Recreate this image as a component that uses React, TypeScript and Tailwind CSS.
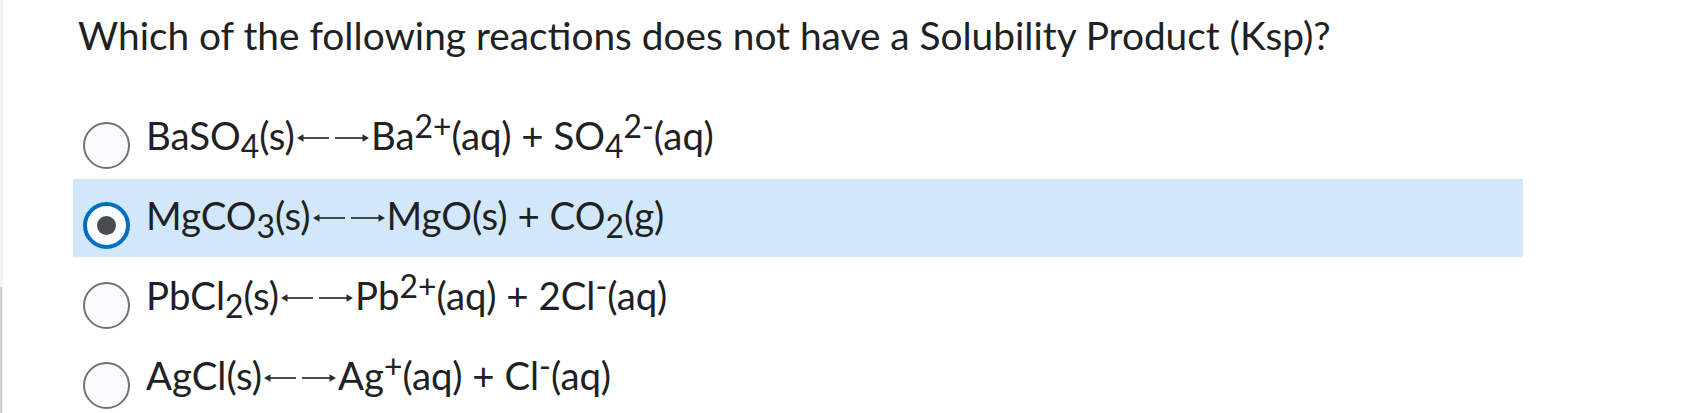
import React from 'react';

type Part = { t: string; sub?: boolean; sup?: boolean; arrow?: boolean };

interface Choice {
  id: string;
  parts: Part[];
}

const AR: Part = { t: '\u2190\u2192', arrow: true };

const choices: Choice[] = [
  {
    id: 'a',
    parts: [
      { t: 'BaSO' }, { t: '4', sub: true }, { t: '(s)' }, AR, { t: 'Ba' }, { t: '2+', sup: true },
      { t: '(aq) + SO' }, { t: '4', sub: true }, { t: '2-', sup: true }, { t: '(aq)' },
    ],
  },
  {
    id: 'b',
    parts: [
      { t: 'MgCO' }, { t: '3', sub: true }, { t: '(s)' }, AR, { t: 'MgO(s) + CO' }, { t: '2', sub: true }, { t: '(g)' },
    ],
  },
  {
    id: 'c',
    parts: [
      { t: 'PbCl' }, { t: '2', sub: true }, { t: '(s)' }, AR, { t: 'Pb' }, { t: '2+', sup: true },
      { t: '(aq) + 2Cl' }, { t: '-', sup: true }, { t: '(aq)' },
    ],
  },
  {
    id: 'd',
    parts: [
      { t: 'AgCl(s)' }, AR, { t: 'Ag' }, { t: '+', sup: true }, { t: '(aq) + Cl' }, { t: '-', sup: true }, { t: '(aq)' },
    ],
  },
];

// the two reaction arrows, thin shafts with small heads
const Arrows: React.FC = () => (
  <svg
    role="img"
    aria-label="←→"
    width="76"
    height="16"
    viewBox="0 0 76 16"
    className="inline-block align-[4px]"
  >
    <line x1="6" y1="8" x2="34" y2="8" stroke="#2a2b2c" strokeWidth="1.7" />
    <path d="M2 8 L8.5 4.3 L8.5 11.7 Z" fill="#2a2b2c" />
    <line x1="40" y1="8" x2="69" y2="8" stroke="#2a2b2c" strokeWidth="1.7" />
    <path d="M74 8 L67.5 4.3 L67.5 11.7 Z" fill="#2a2b2c" />
  </svg>
);

const Formula: React.FC<{ parts: Part[] }> = ({ parts }) => (
  <span className="whitespace-pre">
    {parts.map((p, i) => {
      if (p.arrow) {
        return <Arrows key={i} />;
      }
      if (p.sub) {
        return (
          <sub key={i} className="text-[83%] leading-none relative align-baseline top-[0.27em] bottom-auto">
            {p.t}
          </sub>
        );
      }
      if (p.sup) {
        return (
          <sup key={i} className="text-[83%] leading-none relative align-baseline top-[-0.36em]">
            {p.t}
          </sup>
        );
      }
      return <React.Fragment key={i}>{p.t}</React.Fragment>;
    })}
  </span>
);

const Radio: React.FC<{ checked: boolean }> = ({ checked }) =>
  checked ? (
    <span className="shrink-0 w-[47px] h-[47px] rounded-full border-[4px] border-[#006fbf] bg-[#f9fbff] flex items-center justify-center">
      <span className="block w-[19px] h-[19px] rounded-full bg-[#494c4e]" />
    </span>
  ) : (
    <span className="block shrink-0 w-[47px] h-[47px] rounded-full border-2 border-[#6e7376] bg-[#f9fbff]" />
  );

export default function App() {
  const selected = 'b';

  return (
    <div className="flex h-[413px] overflow-hidden bg-white font-['Lato','Noto_Sans',sans-serif] text-[#202122]">
      <div className="flex flex-col w-[3px] shrink-0">
        <div className="h-[287px] bg-[#f2f2f2]" />
        <div className="flex-1 flex">
          <div className="w-[2px] bg-[#cfcfcf]" />
          <div className="w-[1px] bg-[#f2f2f2]" />
        </div>
      </div>

      <div className="pl-[70px]">
        <h1 className="pl-[5px] pt-[12px] text-[38.8px] leading-[1.2] font-normal">
          Which of the following reactions does not have a Solubility Product (Ksp)?
        </h1>

        <div className="mt-[40px] flex flex-col gap-[2px] w-[1450px]" role="radiogroup">
          {choices.map((c) => {
            const isOn = c.id === selected;
            return (
              <label
                key={c.id}
                className={
                  'flex items-start h-[78px] px-[10px] cursor-pointer ' + (isOn ? 'bg-[#d2e7fa]' : '')
                }
              >
                <span className="block mt-[23px]">
                  <Radio checked={isOn} />
                </span>
                <span className="ml-[16px] mt-[13px] text-[38.4px] leading-[1.2]">
                  <Formula parts={c.parts} />
                </span>
              </label>
            );
          })}
        </div>
      </div>
    </div>
  );
}
